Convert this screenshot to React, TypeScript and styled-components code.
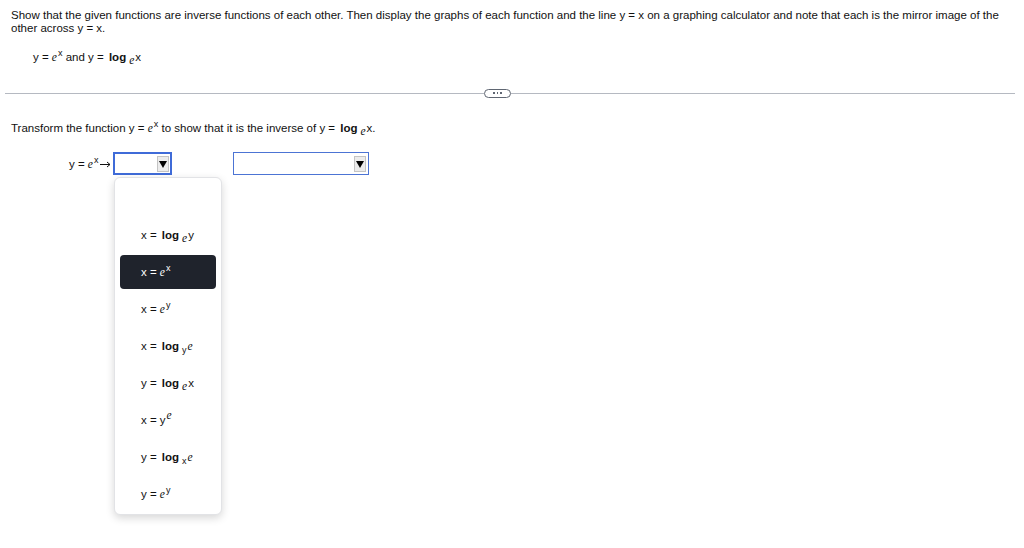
import React from "react";
import styled, { createGlobalStyle } from "styled-components";

const Global = createGlobalStyle`
  html, body { margin: 0; padding: 0; background: #fff; }
  body { font-family: "Liberation Sans", Arial, sans-serif; font-size: 11.5px; color: #111; }
`;

const Page = styled.div`
  display: flex;
  flex-direction: column;
  padding-top: 9px;
`;

const Intro = styled.p`
  margin: 0;
  padding: 0 14px 0 11px;
  line-height: 13px;
`;

const Given = styled.div`
  margin: 15px 0 0 33px;
  line-height: 14px;
`;

const E = styled.i`
  font-family: "Liberation Serif", "Times New Roman", serif;
  font-style: italic;
  font-size: 11.5px;
`;

const Sup = styled.sup`
  font-size: 9px;
  vertical-align: 5px;
  line-height: 0;
  margin-left: 1px;
`;

const Sub = styled.sub`
  font-size: 9px;
  vertical-align: -3px;
  line-height: 0;
  margin: 0 1px 0 3px;
`;

const Log = styled.b`
  font-weight: bold;
  margin-left: 2px;
`;

const DividerRow = styled.div`
  margin: 24px 9px 0 5px;
  display: flex;
  align-items: center;
  height: 10px;
`;

const Line = styled.div<{ $w?: number }>`
  height: 1px;
  background: #b5b9c1;
  flex: ${(p) => (p.$w ? `0 0 ${p.$w}px` : "1 1 auto")};
`;

const Dots = styled.div`
  width: 25px;
  height: 7px;
  border: 1px solid #5f6672;
  border-radius: 5px;
  background: #fff;
  display: flex;
  align-items: center;
  justify-content: center;
  gap: 2px;
`;

const Dot = styled.span`
  width: 1.5px;
  height: 1.5px;
  background: #5f6672;
`;

const Prompt = styled.p`
  margin: 23px 0 0 11px;
  line-height: 14px;
`;

const AnswerRow = styled.div`
  display: flex;
  align-items: center;
  margin: 17px 0 0 69px;
  height: 23px;
`;

const Label = styled.span`
  margin-right: 2px;
  white-space: nowrap;
  display: inline-flex;
  align-items: center;
`;

const Formula = styled.span``;

const ArrowIcon = styled.svg`
  margin-left: 2px;
  margin-top: 1px;
`;

const Select = styled.div<{ $w: number; $focused?: boolean }>`
  box-sizing: border-box;
  width: ${(p) => p.$w}px;
  height: 23px;
  border: ${(p) => (p.$focused ? "2px solid #3f6bd8" : "1px solid #4c74d4")};
  background: #fff;
  display: flex;
  justify-content: flex-end;
  align-items: center;
  padding-right: ${(p) => (p.$focused ? 1 : 2)}px;
`;

const Arrow = styled.div`
  width: 12px;
  height: 16px;
  box-sizing: border-box;
  background: #ececec;
  border: 1px solid #c4c4c4;
  display: flex;
  align-items: center;
  justify-content: center;
`;

const Gap = styled.div`
  width: 61px;
`;

const Menu = styled.div`
  position: absolute;
  left: 114px;
  top: 177px;
  width: 108px;
  box-sizing: border-box;
  border: 1px solid #e2e3e6;
  border-radius: 6px;
  background: #fff;
  box-shadow: 0 3px 8px rgba(0, 0, 0, 0.16);
  padding: 3px 5px;
  display: flex;
  flex-direction: column;
  gap: 3px;
`;

const Item = styled.div<{ $active?: boolean }>`
  height: 34px;
  line-height: 34px;
  border-radius: 4px;
  padding-left: 21px;
  background: ${(p) => (p.$active ? "#1f232c" : "transparent")};
  color: ${(p) => (p.$active ? "#fff" : "#111")};
  white-space: nowrap;
`;

const Tri = () => (
  <svg width="8" height="8" viewBox="0 0 8 8">
    <polygon points="0,1 8,1 4,8" fill="#000" />
  </svg>
);

const Ex = ({ exp }: { exp: string }) => (
  <>
    <E>e</E>
    <Sup>{exp}</Sup>
  </>
);

const LogOf = ({ base, arg, baseE, argE }: { base: string; arg: string; baseE?: boolean; argE?: boolean }) => (
  <>
    <Log>log</Log>
    <Sub>{baseE ? <E>{base}</E> : base}</Sub>
    {argE ? <E>{arg}</E> : arg}
  </>
);

export default function App() {
  return (
    <>
      <Global />
      <Page>
        <Intro>
          Show that the given functions are inverse functions of each other. Then display the graphs of each function and the line y = x on a graphing calculator and note that each is the mirror image of the other across y = x.
        </Intro>
        <Given>
          y = <Ex exp="x" /> and y = <LogOf base="e" baseE arg="x" />
        </Given>
        <DividerRow>
          <Line $w={479} />
          <Dots>
            <Dot />
            <Dot />
            <Dot />
          </Dots>
          <Line />
        </DividerRow>
        <Prompt>
          Transform the function y = <Ex exp="x" /> to show that it is the inverse of y = <LogOf base="e" baseE arg="x." />
        </Prompt>
        <AnswerRow>
          <Label>
            <Formula>
              y = <Ex exp="x" />
            </Formula>
            <ArrowIcon width="11" height="7" viewBox="0 0 11 7">
              <line x1="0" y1="3.5" x2="10" y2="3.5" stroke="#111" strokeWidth="1" />
              <polyline points="7,1 10,3.5 7,6" fill="none" stroke="#111" strokeWidth="1" />
            </ArrowIcon>
          </Label>
          <Select $w={59} $focused>
            <Arrow>
              <Tri />
            </Arrow>
          </Select>
          <Gap />
          <Select $w={136}>
            <Arrow>
              <Tri />
            </Arrow>
          </Select>
        </AnswerRow>
      </Page>
      <Menu>
        <Item />
        <Item>
          x = <LogOf base="e" baseE arg="y" />
        </Item>
        <Item $active>
          x = <Ex exp="x" />
        </Item>
        <Item>
          x = <Ex exp="y" />
        </Item>
        <Item>
          x = <LogOf base="y" arg="e" argE />
        </Item>
        <Item>
          y = <LogOf base="e" baseE arg="x" />
        </Item>
        <Item>
          x = y
          <Sup>
            <E>e</E>
          </Sup>
        </Item>
        <Item>
          y = <LogOf base="x" arg="e" argE />
        </Item>
        <Item>
          y = <Ex exp="y" />
        </Item>
      </Menu>
    </>
  );
}
